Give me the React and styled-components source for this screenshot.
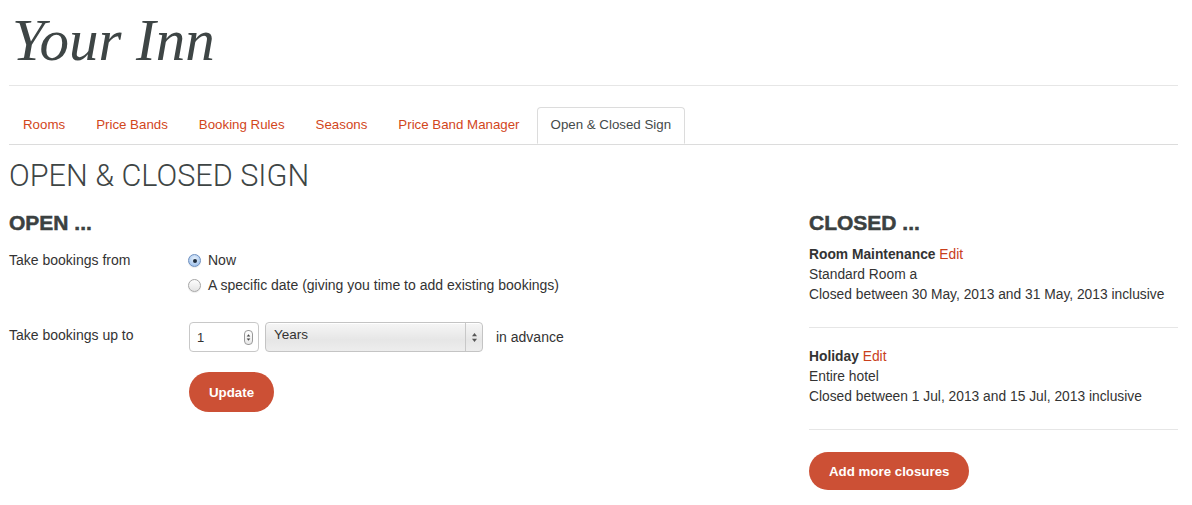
import React from "react";
import styled, { createGlobalStyle } from "styled-components";

const Global = createGlobalStyle`
  html, body { margin: 0; padding: 0; background: #fff; }
  body { font-family: "Liberation Sans", Arial, sans-serif; color: #333; font-size: 14px; }
`;

const Page = styled.div`
  padding: 0 14px 0 9px;
`;

const Header = styled.header`
  border-bottom: 1px solid #e6e6e6;
  height: 86px;
  box-sizing: border-box;
  padding-top: 6px;
`;

const Brand = styled.h1`
  margin: 0;
  font-family: "Liberation Serif", "Times New Roman", serif;
  font-style: italic;
  font-weight: 400;
  font-size: 59px;
  line-height: 68px;
  color: #3e4545;
  padding-left: 3px;
`;

const Tabs = styled.nav`
  display: flex;
  margin-top: 21px;
  border-bottom: 1px solid #dcdcdc;
  height: 37px;
`;

const Tab = styled.a`
  display: flex;
  align-items: center;
  padding: 0 13px 2px;
  margin-right: 3px;
  font-size: 13.3px;
  text-decoration: none;
  color: ${(p) => (p.$active ? "#444a4a" : "#d2461b")};
  border: 1px solid ${(p) => (p.$active ? "#dcdcdc" : "transparent")};
  border-bottom-color: ${(p) => (p.$active ? "#fff" : "transparent")};
  border-radius: 4px 4px 0 0;
  background: #fff;
  margin-bottom: -1px;
  height: 37px;
  box-sizing: border-box;
`;

const PageTitle = styled.h2`
  margin: 14px 0 0;
  font-family: Roboto, "Liberation Sans", sans-serif;
  font-weight: 300;
  font-size: 30.6px;
  line-height: 34px;
  color: #3e4545;
`;

const Columns = styled.div`
  display: grid;
  grid-template-columns: 780px 1fr;
  column-gap: 20px;
  margin-top: 17px;
`;

const SectionTitle = styled.h3`
  margin: 0 0 ${(p) => p.$mb ?? 12}px;
  font-family: "Liberation Sans", Arial, sans-serif;
  font-weight: 700;
  font-size: 21px;
  line-height: 26px;
  color: #3b4141;
  -webkit-text-stroke: 0.5px #3b4141;
`;

const FormRow = styled.div`
  display: grid;
  grid-template-columns: 180px 1fr;
  margin-bottom: ${(p) => p.$mb || 0}px;
`;

const Label = styled.div`
  font-size: 14px;
  line-height: ${(p) => p.$lh || 25}px;
  color: #333;
`;

const RadioList = styled.div`
  display: flex;
  flex-direction: column;
`;

const RadioLine = styled.label`
  display: flex;
  align-items: center;
  gap: 7px;
  font-size: 14px;
  line-height: 25px;
  color: #333;
`;

const RadioDot = styled.span`
  width: 13px;
  height: 13px;
  border-radius: 50%;
  box-sizing: border-box;
  display: inline-flex;
  align-items: center;
  justify-content: center;
  margin-left: -1px;
  border: 1px solid ${(p) => (p.$checked ? "#6d8fbf" : "#a6a6a6")};
  background: ${(p) =>
    p.$checked
      ? "radial-gradient(circle at 50% 35%, #e6f0fb 0%, #a9c8ee 70%, #8fb3e2 100%)"
      : "linear-gradient(#fdfdfd, #e4e4e4)"};
  box-shadow: 0 1px 1px rgba(0, 0, 0, 0.08);
  &::after {
    content: "";
    width: 4px;
    height: 4px;
    border-radius: 50%;
    background: #1f2d3d;
    display: ${(p) => (p.$checked ? "block" : "none")};
  }
`;

const Controls = styled.div`
  display: flex;
  align-items: center;
  gap: 6px;
`;

const NumberBox = styled.div`
  width: 70px;
  height: 30px;
  box-sizing: border-box;
  border: 1px solid #c8c8c8;
  border-radius: 4px;
  display: flex;
  align-items: center;
  justify-content: space-between;
  padding: 0 5px 0 7px;
  font-size: 13px;
  color: #333;
  background: #fff;
`;

const Spinner = styled.span`
  width: 9px;
  height: 15px;
  border: 1px solid #9a9a9a;
  border-radius: 4px;
  box-sizing: border-box;
  display: flex;
  align-items: center;
  justify-content: center;
  background: linear-gradient(#fff, #e9e9e9);
`;

const SelectBox = styled.div`
  width: 218px;
  height: 30px;
  box-sizing: border-box;
  border: 1px solid #c4c4c4;
  border-radius: 4px;
  background: linear-gradient(#f6f6f6, #e6e6e6 60%, #ededed);
  display: flex;
  align-items: stretch;
  font-size: 13.5px;
  color: #333;
  box-shadow: inset 0 1px 0 #fff;
`;

const SelectValue = styled.span`
  flex: 1;
  padding: 4px 0 0 8px;
`;

const SelectArrows = styled.span`
  width: 16px;
  border-left: 1px solid #c8c8c8;
  display: flex;
  align-items: center;
  justify-content: center;
`;

const After = styled.span`
  margin-left: 7px;
  font-size: 14px;
  color: #333;
`;

const Button = styled.button`
  font-family: "Liberation Sans", Arial, sans-serif;
  font-weight: 700;
  font-size: 13.3px;
  color: #fff;
  background: #cc5035;
  border: none;
  border-radius: 20px;
  height: ${(p) => p.$h || 40}px;
  padding: 0 ${(p) => p.$px || 20}px;
  cursor: pointer;
`;

const ClosureList = styled.div`
  display: flex;
  flex-direction: column;
`;

const Closure = styled.div`
  border-bottom: 1px solid #e6e6e6;
  padding-bottom: 22px;
  margin-bottom: 19px;
  font-size: 13.8px;
  line-height: 20px;
  color: #333;
`;

const ClosureName = styled.div`
  font-weight: 700;
  color: #333;
`;

const EditLink = styled.a`
  font-weight: 400;
  color: #c9401c;
  text-decoration: none;
`;

const ButtonRow = styled.div`
  margin-top: ${(p) => p.$mt || 0}px;
`;

const SpinArrows = ({ w = 7, h = 11, color = "#555" }) => (
  <svg width={w} height={h} viewBox="0 0 7 11">
    <path d="M3.5 1 L6 4.2 H1 Z" fill={color} />
    <path d="M3.5 10 L6 6.8 H1 Z" fill={color} />
  </svg>
);

const tabs = [
  "Rooms",
  "Price Bands",
  "Booking Rules",
  "Seasons",
  "Price Band Manager",
  "Open & Closed Sign",
];

const closures = [
  {
    name: "Room Maintenance",
    scope: "Standard Room a",
    dates: "Closed between 30 May, 2013 and 31 May, 2013 inclusive",
  },
  {
    name: "Holiday",
    scope: "Entire hotel",
    dates: "Closed between 1 Jul, 2013 and 15 Jul, 2013 inclusive",
  },
];

export default function App() {
  return (
    <>
      <Global />
      <Page>
        <Header>
          <Brand>Your Inn</Brand>
        </Header>
        <Tabs>
          {tabs.map((t) => (
            <Tab key={t} href="#" $active={t === "Open & Closed Sign"}>
              {t}
            </Tab>
          ))}
        </Tabs>
        <PageTitle>OPEN &amp; CLOSED SIGN</PageTitle>
        <Columns>
          <div>
            <SectionTitle>OPEN ...</SectionTitle>
            <FormRow $mb={24}>
              <Label>Take bookings from</Label>
              <RadioList>
                <RadioLine>
                  <RadioDot $checked />
                  Now
                </RadioLine>
                <RadioLine>
                  <RadioDot />
                  A specific date (giving you time to add existing bookings)
                </RadioLine>
              </RadioList>
            </FormRow>
            <FormRow $mb={20}>
              <Label $lh={26}>Take bookings up to</Label>
              <Controls>
                <NumberBox>
                  1
                  <Spinner>
                    <SpinArrows w={5} h={9} color="#444" />
                  </Spinner>
                </NumberBox>
                <SelectBox>
                  <SelectValue>Years</SelectValue>
                  <SelectArrows>
                    <SpinArrows />
                  </SelectArrows>
                </SelectBox>
                <After>in advance</After>
              </Controls>
            </FormRow>
            <FormRow>
              <div />
              <ButtonRow>
                <Button $px={20}>Update</Button>
              </ButtonRow>
            </FormRow>
          </div>
          <div>
            <SectionTitle $mb={9}>CLOSED ...</SectionTitle>
            <ClosureList>
              {closures.map((c) => (
                <Closure key={c.name}>
                  <ClosureName>
                    {c.name} <EditLink href="#">Edit</EditLink>
                  </ClosureName>
                  <div>{c.scope}</div>
                  <div>{c.dates}</div>
                </Closure>
              ))}
            </ClosureList>
            <ButtonRow $mt={3}>
              <Button $h={38} $px={20}>Add more closures</Button>
            </ButtonRow>
          </div>
        </Columns>
      </Page>
    </>
  );
}
